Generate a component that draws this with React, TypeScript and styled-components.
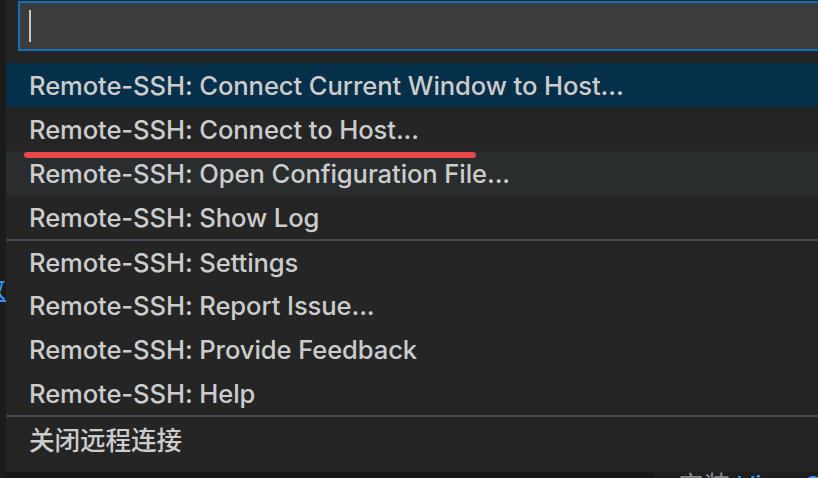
import styled, { createGlobalStyle } from 'styled-components'

const GlobalStyle = createGlobalStyle`
  html, body {
    margin: 0;
    padding: 0;
    background: #1e1e1e;
    overflow: hidden;
  }
`

const Page = styled.div`
  width: 818px;
  height: 478px;
  display: grid;
  grid-template-columns: 6px 1fr;
  grid-template-rows: 472px 6px;
  overflow: hidden;
  font-family: Inter, "Noto Sans CJK SC", sans-serif;
  background: #1e1e1e;
`

const LeftStrip = styled.div`
  grid-row: 1 / 3;
  background: #1b1b1b;
  display: flex;
  justify-content: flex-end;
  align-items: flex-start;
  padding-top: 276px;
  overflow: hidden;
`

const PeekLink = styled.span`
  flex: none;
  color: #3794ff;
  font-size: 26px;
  line-height: 26px;
  text-decoration: underline;
`

const Palette = styled.div`
  width: calc(100% + 24px);
  background: #252526;
  display: flex;
  flex-direction: column;
  padding-bottom: 12px;
  box-sizing: border-box;
`

const InputWrap = styled.div`
  padding: 1px 0 0 12px;
  margin-bottom: 12px;
`

const InputBox = styled.div`
  height: 50px;
  box-sizing: border-box;
  background: #3c3c3c;
  border: 2px solid #0e70c0;
  display: flex;
  align-items: center;
  padding-left: 9px;
`

const Caret = styled.div`
  width: 2px;
  height: 32px;
  background: #c8c8c8;
`

const Row = styled.div<{ $state?: 'selected' | 'hover'; $separator?: boolean }>`
  position: relative;
  height: 44px;
  box-sizing: border-box;
  display: flex;
  align-items: center;
  padding-left: 23px;
  color: #cccccc;
  font-size: 25.6px;
  font-weight: 500;
  letter-spacing: -0.1px;
  white-space: nowrap;
  background: ${p =>
    p.$state === 'selected' ? '#062f4a' : p.$state === 'hover' ? '#2a2d2e' : 'transparent'};
  border-top: ${p => (p.$separator ? '2px solid #45454a' : 'none')};
`

const Underline = styled.div`
  position: absolute;
  z-index: 1;
  left: 18px;
  top: 45px;
  width: 452px;
  height: 6px;
  border-radius: 3px;
  background: #e8474b;
`

const BottomStrip = styled.div`
  display: flex;
  overflow: hidden;
  background: #181818;
`

const BottomText = styled.div`
  margin-left: 649px;
  flex: 1;
  background: #1e1e1e;
  padding: 1px 0 0 23px;
  font-size: 26px;
  line-height: 26px;
  white-space: nowrap;
  color: #8b8b8b;
`

const BlueText = styled.span`
  color: #3794ff;
`

type Item = { label: string; state?: 'selected' | 'hover'; separator?: boolean; marked?: boolean }

const items: Item[] = [
  { label: 'Remote-SSH: Connect Current Window to Host...', state: 'selected' },
  { label: 'Remote-SSH: Connect to Host...', marked: true },
  { label: 'Remote-SSH: Open Configuration File...', state: 'hover' },
  { label: 'Remote-SSH: Show Log' },
  { label: 'Remote-SSH: Settings', separator: true },
  { label: 'Remote-SSH: Report Issue...' },
  { label: 'Remote-SSH: Provide Feedback' },
  { label: 'Remote-SSH: Help' },
  { label: '关闭远程连接', separator: true },
]

const App = () => {
  return (
    <>
      <GlobalStyle />
      <Page>
        <LeftStrip>
          <PeekLink>数</PeekLink>
        </LeftStrip>
        <Palette>
          <InputWrap>
            <InputBox>
              <Caret />
            </InputBox>
          </InputWrap>
          {items.map(item => (
            <Row key={item.label} $state={item.state} $separator={item.separator}>
              {item.label}
              {item.marked && <Underline />}
            </Row>
          ))}
        </Palette>
        <BottomStrip>
          <BottomText>
            安装 <BlueText>View Source</BlueText>
          </BottomText>
        </BottomStrip>
      </Page>
    </>
  )
}

export default App
